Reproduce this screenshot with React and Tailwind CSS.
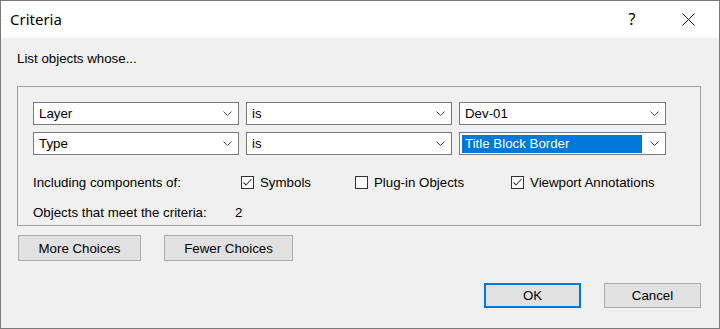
import React from "react";

const Chevron = () => (
  <svg width="9" height="5" viewBox="0 0 9 5" className="shrink-0">
    <polyline points="0.5,0.5 4.5,4.5 8.5,0.5" fill="none" stroke="#505050" strokeWidth="1" />
  </svg>
);

const Combo = ({ value, width, selected }) => (
  <div
    className={`flex items-center h-[23px] bg-white border border-[#7a7a7a] pr-[6px] ${width}`}
  >
    <div className="flex-1 flex items-center h-full px-[2px]">
      {selected ? (
        <span className="flex items-center h-[18px] w-[180px] bg-[#0078d7] text-white pl-[3px]">
          {value}
        </span>
      ) : (
        <span className="pl-[3px] text-black">{value}</span>
      )}
    </div>
    <Chevron />
  </div>
);

const Check = ({ checked, label }) => (
  <div className="flex items-center gap-[6px]">
    <div className="w-[13px] h-[13px] border border-[#333333] bg-white flex items-center justify-center">
      {checked && (
        <svg width="11" height="11" viewBox="0 0 11 11">
          <polyline points="1.5,5.5 4,8 9.5,2" fill="none" stroke="#404040" strokeWidth="1.1" />
        </svg>
      )}
    </div>
    <span>{label}</span>
  </div>
);

const Button = ({ children, className = "", primary }) => (
  <div
    className={`flex items-center justify-center bg-[#e1e1e1] ${
      primary ? "border-2 border-[#0078d7]" : "border border-[#adadad]"
    } ${className}`}
  >
    {children}
  </div>
);

export default function App() {
  return (
    <div
      className="w-[720px] h-[329px] border border-[#7a7a7a] flex flex-col text-[13.3px] leading-[15px] text-black"
      style={{ fontFamily: '"Liberation Sans", Arial, sans-serif' }}
    >
      <div className="h-[37px] bg-white flex items-center pl-[9px] shrink-0">
        <span className="text-[15px] flex-1" style={{ fontFamily: '"Noto Sans", sans-serif' }}>
          Criteria
        </span>
        <span className="text-[16px] w-[56px] text-center mr-[5px]" style={{ fontFamily: '"Noto Sans", sans-serif' }}>?</span>
        <div className="w-[46px] flex justify-center mr-[8px]">
          <svg width="13" height="13" viewBox="0 0 13 13">
            <path d="M0.5 0.5 L12.5 12.5 M12.5 0.5 L0.5 12.5" stroke="#111" strokeWidth="1" />
          </svg>
        </div>
      </div>

      <div className="flex-1 bg-[#f0f0f0] flex flex-col">
        <div className="pl-[16px] pt-[13px] h-[48px]">List objects whose...</div>

        <div className="ml-[16px] w-[684px] h-[140px] border border-[#a0a0a0] flex flex-col pl-[15px] pt-[15px]">
          <div className="flex gap-[7px]">
            <Combo value="Layer" width="w-[206px]" />
            <Combo value="is" width="w-[206px]" />
            <Combo value="Dev-01" width="w-[207px]" />
          </div>
          <div className="flex gap-[7px] mt-[7px]">
            <Combo value="Type" width="w-[206px]" />
            <Combo value="is" width="w-[206px]" />
            <Combo value="Title Block Border" width="w-[207px]" selected />
          </div>
          <div className="flex items-center mt-[20px] h-[15px]">
            <span className="w-[208px]">Including components of:</span>
            <div className="w-[114px]">
              <Check checked label="Symbols" />
            </div>
            <div className="w-[156px]">
              <Check label="Plug-in Objects" />
            </div>
            <Check checked label="Viewport Annotations" />
          </div>
          <div className="flex items-center mt-[15px]">
            <span className="w-[202px]">Objects that meet the criteria:</span>
            <span>2</span>
          </div>
        </div>

        <div className="flex gap-[23px] ml-[17px] mt-[9px]">
          <Button className="w-[123px] h-[26px]">More Choices</Button>
          <Button className="w-[129px] h-[26px]">Fewer Choices</Button>
        </div>

        <div className="flex justify-end gap-[23px] mr-[18px] mt-[22px]">
          <Button primary className="w-[97px] h-[25px]">OK</Button>
          <Button className="w-[97px] h-[25px]">Cancel</Button>
        </div>
      </div>
    </div>
  );
}
